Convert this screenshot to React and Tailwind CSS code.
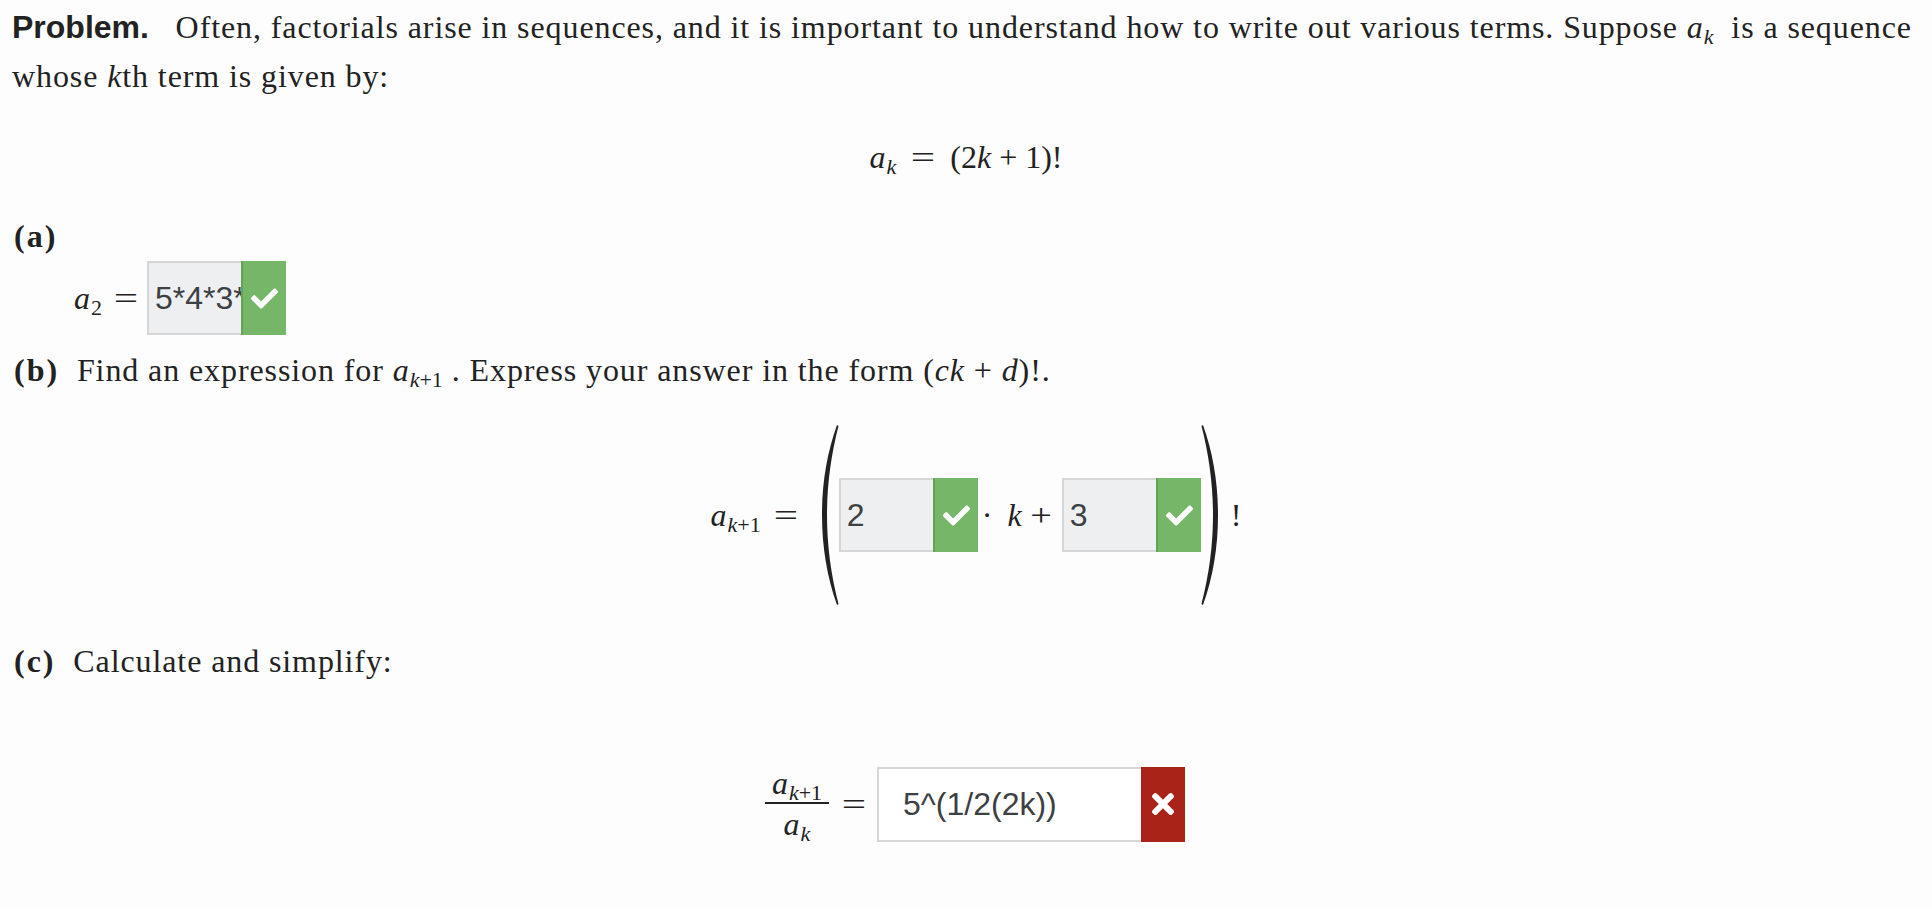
import { FaCheck, FaTimes } from "react-icons/fa";

const serif = { fontFamily: '"Liberation Serif", "Times New Roman", serif' };
const sans = { fontFamily: '"Liberation Sans", Arial, sans-serif' };

function Sub({ children }) {
  return <span className="relative top-[6px] ml-[1px] text-[22px] leading-none tracking-normal">{children}</span>;
}

function A({ sub }) {
  return (
    <span className="italic whitespace-nowrap tracking-normal">
      a<Sub><span className={sub === "2" ? "not-italic" : "italic"}>{sub}</span></Sub>
    </span>
  );
}

function Ak1() {
  return (
    <span className="italic whitespace-nowrap tracking-normal">
      a
      <Sub>
        <span className="italic">k</span>
        <span className="not-italic">+1</span>
      </Sub>
    </span>
  );
}

function Eq({ className = "" }) {
  return <span className={`inline-block scale-x-[1.35] ${className}`}>=</span>;
}

function Answer({ value, status, boxW = 94, sideW = 45, h = 74, pl = "pl-[6px]", bg = "bg-[#eeeff1]", className = "" }) {
  const ok = status === "ok";
  return (
    <div className={`flex ${className}`} style={{ height: h }}>
      <div
        className={`flex items-center overflow-hidden whitespace-nowrap border-2 border-r-0 border-[#d6d6d6] ${bg} ${pl} text-[32px] tracking-normal text-[#3d4043]`}
        style={{ width: boxW, ...sans }}
      >
        {value}
      </div>
      <div
        className={`flex items-center justify-center text-white ${
          ok ? "bg-[#76b668] border-l-2 border-[#62a355]" : "bg-[#a92319]"
        }`}
        style={{ width: sideW }}
      >
        {ok ? <FaCheck size={27} /> : <FaTimes size={32} />}
      </div>
    </div>
  );
}

function Paren({ right }) {
  return (
    <svg width="20" height="184" viewBox="0 0 20 184" className={right ? "-scale-x-100" : ""}>
      <path
        d="M18 2 C8 30 3 60 3 92 C3 124 8 154 18 182 L19.5 181 C12 152 8 122 8 92 C8 62 12 32 19.5 3 Z"
        fill="#222"
      />
    </svg>
  );
}

function Label({ children }) {
  return <b className="ml-[2px] tracking-[2px]">{children}</b>;
}

export default function App() {
  return (
    <div className="min-h-screen bg-[#fdfdfd] px-3 pt-[3px] text-[#222]" style={serif}>
      <p className="text-[32px] leading-[49px] tracking-[0.9px]">
        <span className="font-bold tracking-normal" style={sans}>
          Problem.
        </span>
        &nbsp;&nbsp; Often, factorials arise in sequences, and it is important to understand how to write
        out various terms. Suppose <A sub="k" />&nbsp; is a sequence whose <i>k</i>th term is given by:
      </p>

      <div className="mt-[32px] flex justify-center text-[32px] leading-[49px]">
        <span>
          <A sub="k" /> <Eq className="mx-[10px]" /> (2<i>k</i> + 1)!
        </span>
      </div>

      <div className="mt-[30px] text-[32px] leading-[49px]">
        <Label>(a)</Label>
      </div>

      <div className="ml-[62px] flex items-center text-[32px]">
        <A sub="2" />
        <Eq className="ml-[15px] mr-[12px]" />
        <Answer value="5*4*3*2*1" status="ok" />
      </div>

      <p className="mt-[11px] text-[32px] leading-[49px] tracking-[0.9px]">
        <Label>(b)</Label>&nbsp; Find an expression for <Ak1 /> . Express your answer in the form (<i>ck</i> + <i>d</i>)!.
      </p>

      <div className="mt-[28px] flex items-center justify-center pl-[20px] text-[32px]">
        <Ak1 />
        <Eq className="ml-[16px] mr-[24px]" />
        <Paren />
        <Answer value="2" status="ok" />
        <span className="ml-[4px]">·</span>
        <i className="ml-[15px]">k</i>
        <span className="ml-[10px] inline-block scale-x-[1.2]">+</span>
        <Answer value="3" status="ok" className="ml-[12px]" />
        <Paren right />
        <span className="ml-[10px]">!</span>
      </div>

      <p className="mt-[30px] text-[32px] leading-[49px] tracking-[0.9px]">
        <Label>(c)</Label>&nbsp; Calculate and simplify:
      </p>

      <div className="mt-[78px] flex items-center justify-center pl-[18px] text-[32px]">
        <div className="flex flex-col items-center">
          <div className="px-[2px] leading-[38px]">
            <Ak1 />
          </div>
          <div className="h-[2px] w-[64px] bg-[#222]" />
          <div className="leading-[40px]">
            <A sub="k" />
          </div>
        </div>
        <Eq className="ml-[16px] mr-[14px]" />
        <Answer value="5^(1/2(2k))" status="bad" boxW={264} sideW={44} h={75} pl="pl-[24px]" bg="bg-white" />
      </div>
    </div>
  );
}
